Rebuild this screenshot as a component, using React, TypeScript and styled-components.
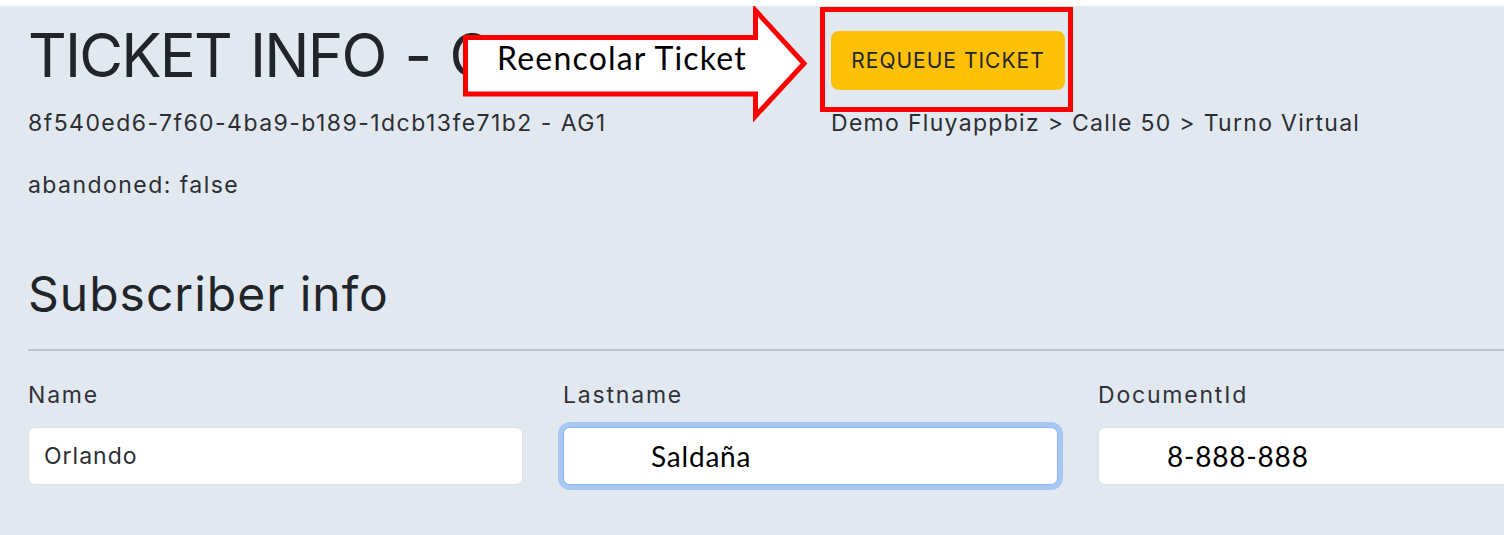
import React from "react";
import styled, { createGlobalStyle } from "styled-components";

const GlobalStyle = createGlobalStyle`
  html, body {
    margin: 0;
    padding: 0;
    background: #e2e8f0;
    overflow: hidden;
  }
  body {
    font-family: Inter, "Noto Sans", sans-serif;
    color: #212529;
  }
  * { box-sizing: border-box; }
`;

const TopStrip = styled.div`
  height: 6px;
  background: #ffffff;
`;

const Page = styled.div`
  position: relative;
  padding: 0 0 0 28px;
  width: 1504px;
  height: 529px;
`;

const Header = styled.div`
  display: grid;
  grid-template-columns: 803px 1fr;
`;

const LeftCol = styled.div`
  display: flex;
  flex-direction: column;
`;

const RightCol = styled.div`
  display: flex;
  flex-direction: column;
  align-items: flex-start;
`;

const Title = styled.h1`
  margin: 13px 0 0;
  font-size: 60px;
  line-height: 72px;
  font-weight: 400;
  letter-spacing: -1.8px;
  word-spacing: 4px;
  white-space: nowrap;
`;

const Meta = styled.p<{ $gap: number }>`
  margin: ${(p) => p.$gap}px 0 0;
  font-size: 23px;
  line-height: 33px;
  letter-spacing: 1.45px;
  color: #2b2f33;
  white-space: nowrap;
`;

const RequeueButton = styled.button`
  margin-top: 25px;
  width: 234px;
  height: 59px;
  border: none;
  border-radius: 8px;
  background: #ffc107;
  color: #212529;
  font-family: Inter, "Noto Sans", sans-serif;
  font-size: 21px;
  letter-spacing: 1px;
  text-transform: uppercase;
  cursor: pointer;
`;

const Breadcrumb = styled.div`
  margin-top: 17px;
  font-size: 23px;
  line-height: 33px;
  letter-spacing: 1.3px;
  color: #2b2f33;
  white-space: nowrap;
`;

const SectionTitle = styled.h2`
  margin: 63px 0 0;
  font-size: 48px;
  line-height: 58px;
  font-weight: 400;
  letter-spacing: 1px;
`;

const Divider = styled.hr`
  margin: 26px 0 0;
  border: none;
  height: 2px;
  background: #bec4cb;
`;

const FieldGrid = styled.div`
  display: grid;
  grid-template-columns: 495px 495px 495px;
  column-gap: 40px;
  margin-top: 28px;
`;

const Field = styled.div`
  display: flex;
  flex-direction: column;
`;

const Label = styled.label`
  font-size: 23px;
  line-height: 33px;
  letter-spacing: 1.8px;
  color: #2e3338;
`;

const InputBox = styled.div<{ $focused?: boolean; $indent: number; $pasted?: boolean }>`
  margin-top: 15px;
  height: 58px;
  display: flex;
  align-items: center;
  padding-left: ${(p) => p.$indent}px;
  background: #ffffff;
  border-radius: 7px;
  border: 1px solid ${(p) => (p.$focused ? "#86b7fe" : "#dde1e6")};
  box-shadow: ${(p) => (p.$focused ? "0 0 0 5px #a9c7f3" : "none")};
  font-family: ${(p) => (p.$pasted ? 'Lato, "Liberation Sans", sans-serif' : 'Inter, "Noto Sans", sans-serif')};
  font-size: ${(p) => (p.$pasted ? 28 : 23)}px;
  letter-spacing: ${(p) => (p.$pasted ? 0.8 : 1)}px;
  color: ${(p) => (p.$pasted ? "#000000" : "#2b2f36")};
  white-space: nowrap;
`;

const ArrowCallout = styled.div`
  position: absolute;
  left: 460px;
  top: 0;
  width: 352px;
  height: 116px;
`;

const ArrowShape = styled.svg`
  position: absolute;
  inset: 0;
`;

const ArrowText = styled.span`
  position: absolute;
  left: 37px;
  top: 32px;
  font-family: Lato, "Liberation Sans", sans-serif;
  font-size: 32px;
  line-height: 40px;
  letter-spacing: 1.2px;
  color: #000000;
  white-space: nowrap;
`;

const HighlightFrame = styled.div`
  position: absolute;
  left: 820px;
  top: 1px;
  width: 253px;
  height: 105px;
  border: 5px solid #ff0000;
`;

export default function App() {
  return (
    <>
      <GlobalStyle />
      <TopStrip />
      <Page>
        <Header>
          <LeftCol>
            <Title>TICKET INFO - C</Title>
            <Meta $gap={16}>8f540ed6-7f60-4ba9-b189-1dcb13fe71b2 - AG1</Meta>
            <Meta $gap={29}>abandoned: false</Meta>
          </LeftCol>
          <RightCol>
            <RequeueButton>Requeue ticket</RequeueButton>
            <Breadcrumb>Demo Fluyappbiz &gt; Calle 50 &gt; Turno Virtual</Breadcrumb>
          </RightCol>
        </Header>

        <SectionTitle>Subscriber info</SectionTitle>
        <Divider />

        <FieldGrid>
          <Field>
            <Label>Name</Label>
            <InputBox $indent={15}>Orlando</InputBox>
          </Field>
          <Field>
            <Label>Lastname</Label>
            <InputBox $indent={87} $focused $pasted>
              Saldaña
            </InputBox>
          </Field>
          <Field>
            <Label>DocumentId</Label>
            <InputBox $indent={68} $pasted>
              8-888-888
            </InputBox>
          </Field>
        </FieldGrid>

        <ArrowCallout>
          <ArrowShape width="352" height="116" viewBox="460 0 352 116">
            <polygon
              points="465.5,31.5 755.5,31.5 755.5,4.5 804,57.5 755.5,110 755.5,88 465.5,88"
              fill="#ffffff"
              stroke="#ff0000"
              strokeWidth="5"
              strokeLinejoin="miter"
            />
          </ArrowShape>
          <ArrowText>Reencolar Ticket</ArrowText>
        </ArrowCallout>

        <HighlightFrame />
      </Page>
    </>
  );
}
